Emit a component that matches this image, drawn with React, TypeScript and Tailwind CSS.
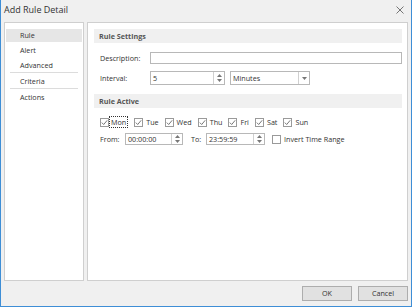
import React from "react";

const font = { fontFamily: '"Segoe UI", "Open Sans", "Noto Sans", sans-serif' };

function Check({ checked, label, focus }: { checked: boolean; label: string; focus?: boolean }) {
  return (
    <div className={`flex items-center ${focus ? "gap-0" : "gap-[3px]"}`}>
      <div className="w-[9px] h-[9px] border border-[#9a9a9a] bg-white flex items-center justify-center">
        {checked && (
          <svg width="7" height="7" viewBox="0 0 7 7">
            <path d="M0.8 3.6 L2.7 5.5 L6.2 1.3" fill="none" stroke="#555" strokeWidth="0.8" />
          </svg>
        )}
      </div>
      <span className={`text-[7.2px] text-[#333] leading-[10px] ${focus ? "border border-dotted border-[#333] px-[1px]" : ""}`}>
        {label}
      </span>
    </div>
  );
}

function Spin() {
  return (
    <div className="w-[11px] h-full border-l border-[#d0d0d0] flex flex-col items-center justify-center gap-[2px]">
      <svg width="5" height="3" viewBox="0 0 5 3"><path d="M0 3 L2.5 0 L5 3 Z" fill="#777" /></svg>
      <svg width="5" height="3" viewBox="0 0 5 3"><path d="M0 0 L2.5 3 L5 0 Z" fill="#777" /></svg>
    </div>
  );
}

export default function App() {
  const days = ["Mon", "Tue", "Wed", "Thu", "Fri", "Sat", "Sun"];
  return (
    <div style={font} className="w-[412px] h-[307px] bg-[#f0f0f0] border-l border-r border-b border-[#3e8ed6] flex flex-col">
      {/* title bar */}
      <div className="h-[20px] flex items-center justify-between pl-[3px] pr-[7px]">
        <span className="text-[9px] text-[#333]">Add Rule Detail</span>
        <svg width="8" height="8" viewBox="0 0 8 8">
          <path d="M0.5 0.5 L7.5 7.5 M7.5 0.5 L0.5 7.5" stroke="#666" strokeWidth="0.9" />
        </svg>
      </div>

      <div className="flex gap-[3px] px-[3px] mt-[2px] h-[259px]">
        {/* left nav */}
        <div className="w-[80px] h-full bg-white border border-[#cfcfcf] pt-[6px] px-[1px] text-[7.2px] text-[#333]">
          <div className="h-[13px] bg-[#e6e6e6] pl-[14px] flex items-center">Rule</div>
          <div className="h-[15px] pl-[14px] flex items-center mt-px">Alert</div>
          <div className="h-[14px] pl-[14px] flex items-center">Advanced</div>
          <div className="h-[2px] mx-[4px] border-t border-[#dcdcdc]" />
          <div className="h-[14px] pl-[14px] flex items-center">Criteria</div>
          <div className="h-[2px] mx-[4px] border-t border-[#dcdcdc]" />
          <div className="h-[14px] pl-[14px] flex items-center">Actions</div>
        </div>

        {/* right content */}
        <div className="flex-1 h-full bg-white border border-[#cfcfcf] pt-[6px] pl-[6px] pr-[5px] text-[7.2px] text-[#333]">
          <div className="h-[14px] bg-[#f0f0f0] flex items-center pl-[5px] font-bold text-[#555]">Rule Settings</div>

          <div className="flex items-center mt-[9px] h-[12px]">
            <span className="w-[56px] pl-[6px]">Description:</span>
            <div className="flex-1 h-[12px] border border-[#b8b8b8] bg-white" />
          </div>

          <div className="flex items-center mt-[7px] h-[14px]">
            <span className="w-[56px] pl-[6px]">Interval:</span>
            <div className="w-[75px] h-[14px] border border-[#b8b8b8] bg-white flex items-center">
              <span className="flex-1 pl-[2px]">5</span>
              <Spin />
            </div>
            <div className="w-[80px] h-[14px] ml-[5px] border border-[#b8b8b8] bg-white flex items-center">
              <span className="flex-1 pl-[2px]">Minutes</span>
              <div className="w-[11px] h-full border-l border-[#d0d0d0] flex items-center justify-center">
                <svg width="5" height="3" viewBox="0 0 5 3"><path d="M0 0 L2.5 3 L5 0 Z" fill="#777" /></svg>
              </div>
            </div>
          </div>

          <div className="h-[14px] bg-[#f0f0f0] flex items-center pl-[5px] font-bold text-[#555] mt-[9px]">Rule Active</div>

          <div className="flex items-center mt-[8px] pl-[6px] gap-[6px]">
            {days.map((d, i) => (
              <Check key={d} checked label={d} focus={i === 0} />
            ))}
          </div>

          <div className="flex items-center mt-[5px] h-[12px] pl-[6px]">
            <span className="w-[25px]">From:</span>
            <div className="w-[58px] h-[12px] border border-[#b8b8b8] bg-white flex items-center">
              <span className="flex-1 pl-[2px]">00:00:00</span>
              <Spin />
            </div>
            <span className="w-[15px] ml-[8px]">To:</span>
            <div className="w-[59px] h-[12px] border border-[#b8b8b8] bg-white flex items-center">
              <span className="flex-1 pl-[2px]">23:59:59</span>
              <Spin />
            </div>
            <div className="ml-[7px]">
              <Check checked={false} label="Invert Time Range" />
            </div>
          </div>
        </div>
      </div>

      <div className="flex justify-end gap-[6px] pr-[3px] mt-[5px]">
        <button className="w-[50px] h-[15px] border border-[#adadad] bg-[#e1e1e1] text-[7.2px] text-[#333]">OK</button>
        <button className="w-[50px] h-[15px] border border-[#adadad] bg-[#e1e1e1] text-[7.2px] text-[#333]">Cancel</button>
      </div>
    </div>
  );
}
